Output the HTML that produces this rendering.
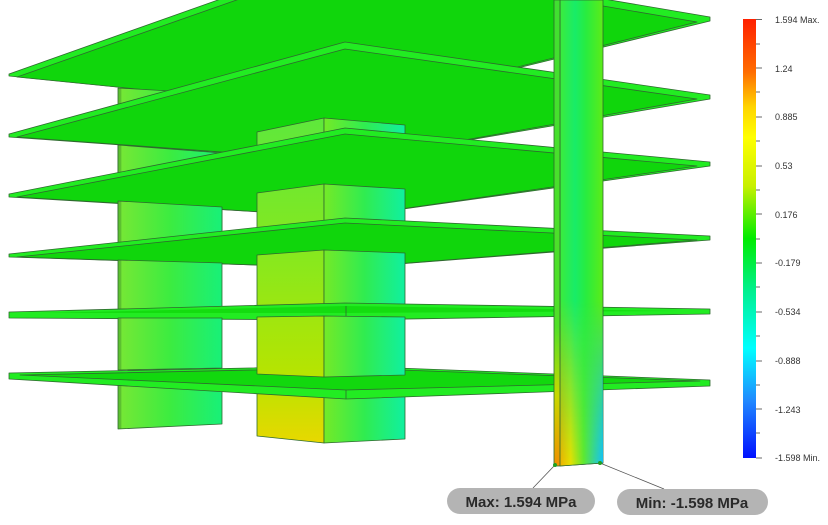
<!DOCTYPE html>
<html><head><meta charset="utf-8"><style>
html,body{margin:0;padding:0;background:#fff;width:828px;height:525px;overflow:hidden}
svg{display:block}
</style></head><body>
<svg width="828" height="525" viewBox="0 0 828 525" xmlns="http://www.w3.org/2000/svg" font-family="Liberation Sans, sans-serif">
<defs>
<linearGradient id="lc" gradientUnits="userSpaceOnUse" x1="118" x2="222" y1="0" y2="0"><stop offset="0" stop-color="#5cc030"/><stop offset="0.03" stop-color="#5cc030"/><stop offset="0.035" stop-color="#74e836"/><stop offset="0.5" stop-color="#3cec40"/><stop offset="1" stop-color="#18f078"/></linearGradient>
<linearGradient id="mcl" gradientUnits="userSpaceOnUse" x1="0" x2="0" y1="118" y2="443"><stop offset="0" stop-color="#5ee83c"/><stop offset="0.45" stop-color="#8ae81c"/><stop offset="0.8" stop-color="#b8e400"/><stop offset="1" stop-color="#e8d800"/></linearGradient>
<linearGradient id="mcr" gradientUnits="userSpaceOnUse" x1="324" x2="405" y1="0" y2="0"><stop offset="0" stop-color="#74ea28"/><stop offset="0.5" stop-color="#30ec50"/><stop offset="1" stop-color="#10f0a0"/></linearGradient>
<linearGradient id="rc" x1="0" x2="1" y1="0" y2="0"><stop offset="0" stop-color="#3cec3c"/><stop offset="0.35" stop-color="#18ec68"/><stop offset="0.6" stop-color="#28ec40"/><stop offset="1" stop-color="#5cec18"/></linearGradient>
<linearGradient id="rcb" x1="0" x2="1" y1="0" y2="0"><stop offset="0" stop-color="#f0b000"/><stop offset="0.25" stop-color="#e8e000"/><stop offset="0.55" stop-color="#60e830"/><stop offset="1" stop-color="#10c0ff"/></linearGradient>
<linearGradient id="fade" x1="0" x2="0" y1="0" y2="1"><stop offset="0" stop-color="#fff" stop-opacity="0"/><stop offset="0.5" stop-color="#fff" stop-opacity="0.5"/><stop offset="1" stop-color="#fff" stop-opacity="1"/></linearGradient>
<linearGradient id="ls" x1="0" x2="0" y1="0" y2="1"><stop offset="0" stop-color="#40e030"/><stop offset="0.7" stop-color="#50e028"/><stop offset="0.85" stop-color="#c8d800"/><stop offset="1" stop-color="#f09000"/></linearGradient>
<mask id="m1"><rect x="554" y="300" width="50" height="166" fill="url(#fade)"/></mask>
<linearGradient id="cb" x1="0" x2="0" y1="0" y2="1">
<stop offset="0" stop-color="#ff2000"/><stop offset="0.12" stop-color="#ff6c00"/><stop offset="0.2" stop-color="#ffd400"/><stop offset="0.27" stop-color="#ffff00"/><stop offset="0.38" stop-color="#c8f000"/><stop offset="0.5" stop-color="#00ec00"/><stop offset="0.62" stop-color="#00f090"/><stop offset="0.75" stop-color="#00ffff"/><stop offset="0.87" stop-color="#2088ff"/><stop offset="1" stop-color="#0010ff"/>
</linearGradient>
</defs>
<g stroke="#2f6a2f" stroke-width="0.8" stroke-linejoin="round">
<polygon points="9,74 345,-45 710,17 710,21 346,110 9,76" fill="#22ec22"/>
<polygon points="17,77 345,-38 697,22 346,110" fill="#10d60c"/>
<polygon points="118,88 222,94 222,200 118,200" fill="url(#lc)"/>
<polygon points="9,134 345,42 710,95 710,99 346,161 9,137" fill="#22ec22"/>
<polygon points="17,137 345,49 697,99 346,161" fill="#10d60c"/>
<polygon points="118,145 222,153 222,230 118,230" fill="url(#lc)"/>
<polygon points="257,132 324,118 324,200 257,200" fill="url(#mcl)"/>
<polygon points="324,118 405,125 405,200 324,200" fill="url(#mcr)"/>
<polygon points="9,194 345,128 710,162 710,166 346,217 9,197" fill="#22ec22"/>
<polygon points="17,197 345,134 697,166 346,217" fill="#10d60c"/>
<polygon points="118,201 222,207 222,250 118,250" fill="url(#lc)"/>
<polygon points="257,193 324,184 324,250 257,250" fill="url(#mcl)"/>
<polygon points="324,184 405,189 405,250 324,250" fill="url(#mcr)"/>
<polygon points="9,254 345,218 710,236 710,240 346,268 9,257" fill="#22ec22"/>
<polygon points="17,257 345,223 697,240 346,268" fill="#10d60c"/>
<polygon points="118,260 222,263 222,312 118,312" fill="url(#lc)"/>
<polygon points="257,255 324,250 324,312 257,312" fill="url(#mcl)"/>
<polygon points="324,250 405,253 405,312 324,312" fill="url(#mcr)"/>
<polygon points="9,312 345,303 710,309 710,314 346,320 9,318" fill="#22ec22"/>
<polygon points="40,313 345,306 680,311 346,313" fill="#14dc10" stroke="none"/>
<line x1="346" y1="306" x2="346" y2="320"/>
<polygon points="118,380 222,380 222,424 118,429" fill="url(#lc)"/>
<polygon points="257,380 324,380 324,443 257,436" fill="url(#mcl)"/>
<polygon points="324,380 405,380 405,439 324,443" fill="url(#mcr)"/>
<polygon points="9,373 346,366 710,380 710,386 346,399 9,379" fill="#22ec22"/>
<polygon points="20,375 346,368 700,381 346,390" fill="#12d80e"/>
<line x1="346" y1="390" x2="346" y2="399"/>
<polygon points="118,318 222,318 222,368 118,370" fill="url(#lc)"/>
<polygon points="257,317 324,316 324,377 257,374" fill="url(#mcl)"/>
<polygon points="324,316 405,317 405,375 324,377" fill="url(#mcr)"/>
</g>
<g stroke="#2f6a2f" stroke-width="0.8">
<polygon points="560,0 603,0 603,463 560,466" fill="url(#rc)"/>
<polygon points="560,300 603,300 603,463 560,466" fill="url(#rcb)" mask="url(#m1)" stroke="none"/>
<polygon points="554,0 560,0 560,466 554,466" fill="url(#ls)"/>
<line x1="560" y1="466" x2="603" y2="463"/>
</g>
<line x1="555" y1="465" x2="533" y2="488" stroke="#555" stroke-width="0.8"/>
<line x1="600" y1="463" x2="664" y2="489" stroke="#555" stroke-width="0.8"/>
<circle cx="555" cy="465" r="2" fill="#20a020"/>
<circle cx="600" cy="463" r="2" fill="#20a020"/>
<rect x="447" y="488" width="148" height="26" rx="13" fill="#b4b4b4"/>
<text x="521" y="507" font-size="15" font-weight="bold" fill="#2a2a2a" text-anchor="middle">Max: 1.594 MPa</text>
<rect x="617" y="489" width="151" height="26" rx="13" fill="#b4b4b4"/>
<text x="692" y="508" font-size="15" font-weight="bold" fill="#2a2a2a" text-anchor="middle">Min: -1.598 MPa</text>
<rect x="743" y="19" width="13" height="439" fill="url(#cb)"/>
<g stroke="#444" stroke-width="0.8">
<line x1="756" y1="19.5" x2="762" y2="19.5"/><line x1="756" y1="44" x2="760" y2="44"/>
<line x1="756" y1="68" x2="762" y2="68"/><line x1="756" y1="92" x2="760" y2="92"/>
<line x1="756" y1="117" x2="762" y2="117"/><line x1="756" y1="141" x2="760" y2="141"/>
<line x1="756" y1="166" x2="762" y2="166"/><line x1="756" y1="190" x2="760" y2="190"/>
<line x1="756" y1="214" x2="762" y2="214"/><line x1="756" y1="239" x2="760" y2="239"/>
<line x1="756" y1="263" x2="762" y2="263"/><line x1="756" y1="287" x2="760" y2="287"/>
<line x1="756" y1="312" x2="762" y2="312"/><line x1="756" y1="336" x2="760" y2="336"/>
<line x1="756" y1="361" x2="762" y2="361"/><line x1="756" y1="385" x2="760" y2="385"/>
<line x1="756" y1="409" x2="762" y2="409"/><line x1="756" y1="433" x2="760" y2="433"/>
<line x1="756" y1="458" x2="762" y2="458"/>
</g>
<g font-size="9" fill="#333">
<text x="775" y="23">1.594 Max.</text>
<text x="775" y="72">1.24</text>
<text x="775" y="120">0.885</text>
<text x="775" y="169">0.53</text>
<text x="775" y="218">0.176</text>
<text x="775" y="266">-0.179</text>
<text x="775" y="315">-0.534</text>
<text x="775" y="364">-0.888</text>
<text x="775" y="413">-1.243</text>
<text x="775" y="461">-1.598 Min.</text>
</g>
</svg>
</body></html>
